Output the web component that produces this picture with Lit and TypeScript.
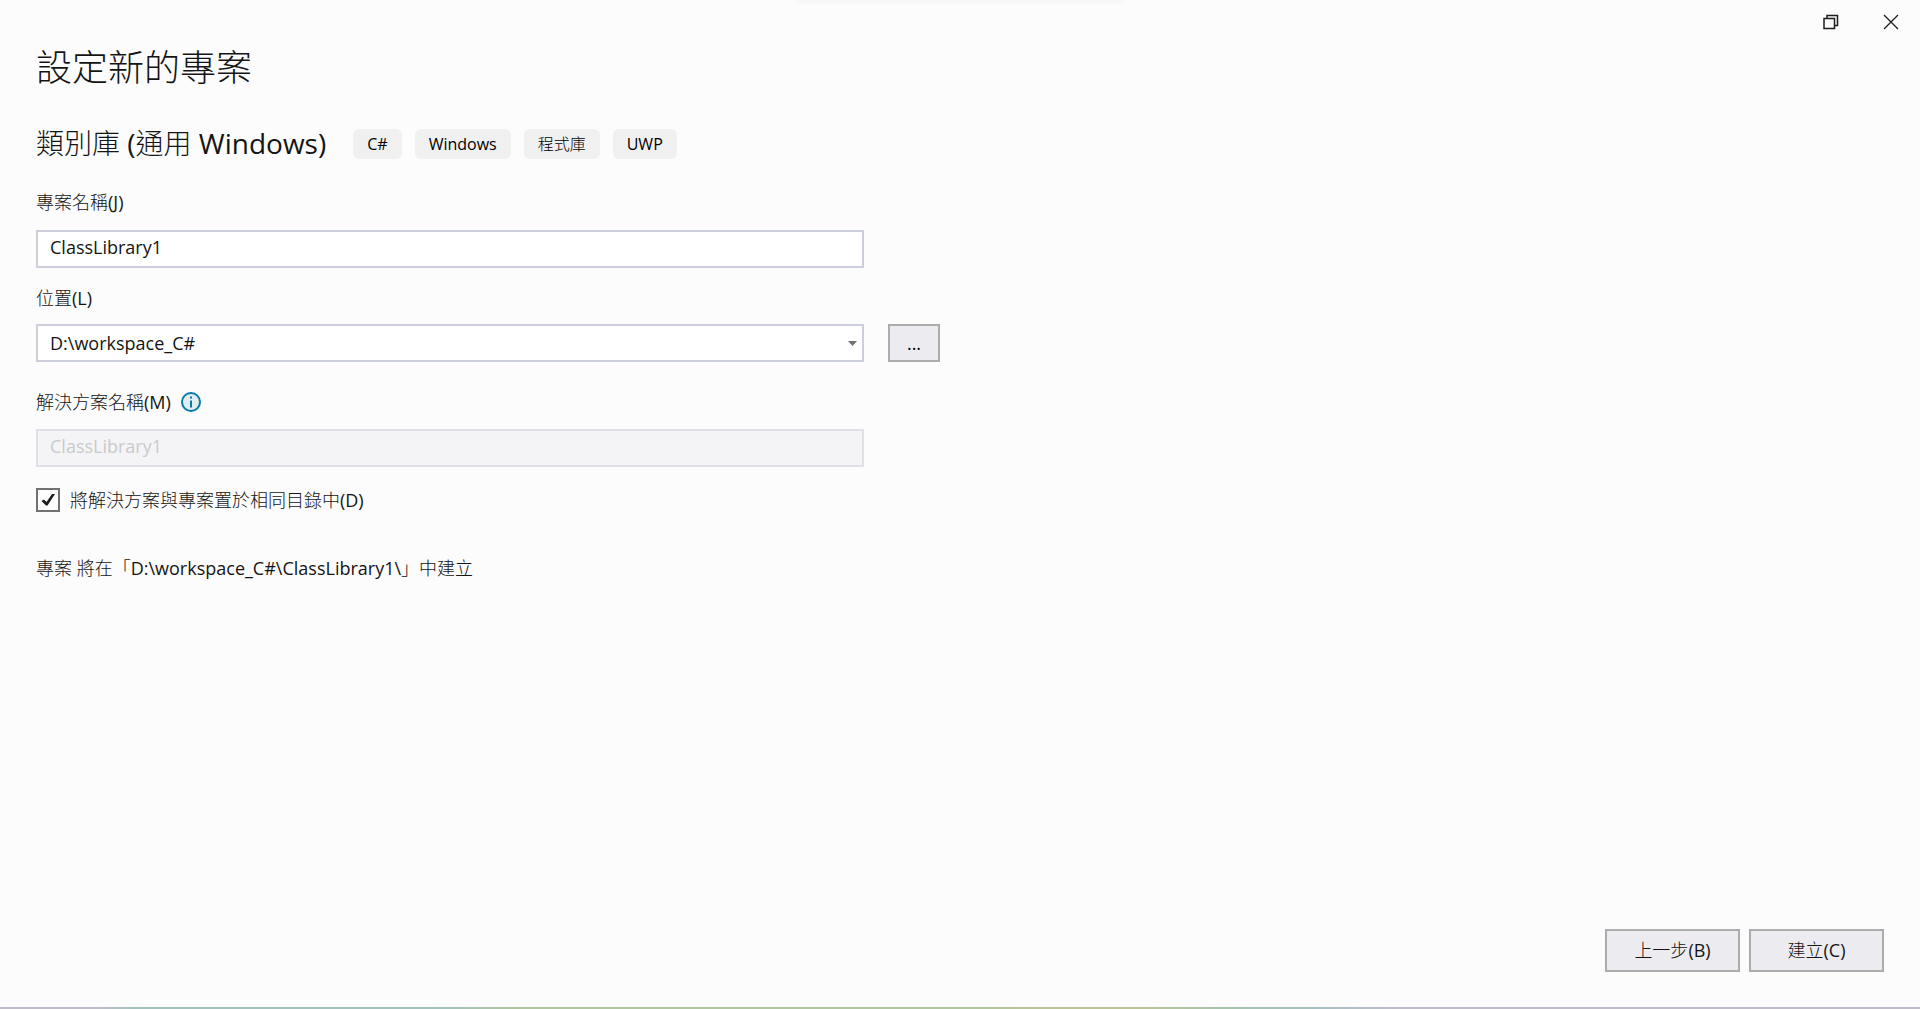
import { LitElement, html, css } from "lit";
import { customElement, state } from "lit/decorators.js";

/** Sets runs of Latin text at regular weight beside the lighter Chinese glyphs. */
const mixed = (text: string) =>
  text
    .split(/([!-~]+)/)
    .filter((run) => run !== "")
    .map((run) => (/^[!-~]/.test(run) ? html`<span class="latin">${run}</span>` : run));

@customElement("app-root")
export class AppRoot extends LitElement {
  @state() private projectName = "ClassLibrary1";
  @state() private location = "D:\\workspace_C#";
  @state() private sameDirectory = true;

  private tags = ["C#", "Windows", "程式庫", "UWP"];

  static styles = css`
    :host {
      display: block;
      color: #141414;
      background: #fcfcfc;
      font-family: "Open Sans", "Noto Sans CJK TC", sans-serif;
      font-size: 18px;
      font-weight: 300;
      line-height: 24px;
    }
    * {
      box-sizing: border-box;
    }
    button,
    input,
    select {
      font: inherit;
      color: inherit;
      margin: 0;
      border-radius: 0;
    }
    .window {
      position: relative;
      display: flex;
      flex-direction: column;
      min-height: 100vh;
      overflow: hidden;
    }
    .shade {
      position: absolute;
      top: -8px;
      left: 50%;
      width: 328px;
      height: 8px;
      margin-left: -164px;
      box-shadow: 0 0 8px rgba(0, 0, 0, 0.06);
    }
    .titlebar {
      display: flex;
      justify-content: flex-end;
      height: 44px;
    }
    .caption {
      display: grid;
      place-items: center;
      width: 60px;
      height: 44px;
      padding: 0 0 0 2px;
      border: 0;
      background: none;
    }
    main {
      flex: 1;
      padding: 0 36px;
    }
    h1 {
      margin: 0;
      font-size: 36px;
      font-weight: 300;
      line-height: 48px;
    }
    .template {
      display: flex;
      align-items: center;
      gap: 27px;
      margin-top: 32px;
    }
    h2 {
      margin: 0;
      padding-bottom: 2px;
      font-size: 28px;
      font-weight: 300;
      line-height: 38px;
    }
    .latin {
      font-weight: 400;
    }
    .tags {
      display: flex;
      gap: 13px;
      margin: 0;
      padding: 0;
      list-style: none;
    }
    .tag {
      padding: 3px 14px;
      border-radius: 6px;
      background: #f0f0f0;
      color: #000;
      font-size: 16px;
    }
    .field {
      display: flex;
      flex-direction: column;
      align-items: flex-start;
    }
    .label-row {
      display: flex;
      align-items: center;
      gap: 10px;
    }
    .row {
      display: flex;
      gap: 24px;
      width: 100%;
    }
    .box {
      width: 100%;
      max-width: 828px;
      height: 38px;
      padding: 0 12px;
      border: 2px solid #cccedb;
      background: #fff;
      font-weight: 400;
      outline: none;
    }
    .text {
      padding-bottom: 5px;
    }
    .box:disabled {
      border-color: #e0e0e8;
      background: #f4f4f6;
      color: #cacacc;
      opacity: 1;
    }
    .combo {
      position: relative;
      width: 100%;
      max-width: 828px;
    }
    .combo .box {
      display: block;
      appearance: none;
    }
    .arrow {
      position: absolute;
      right: 7px;
      top: 17px;
      pointer-events: none;
    }
    .button {
      padding: 0 0 2px;
      border: 2px solid #acacac;
      background: #ececf0;
      text-align: center;
    }
    .browse {
      flex: none;
      width: 52px;
      height: 38px;
      padding: 0;
      color: #000;
      font-weight: 400;
    }
    .name {
      margin-top: 26px;
      gap: 16px;
    }
    .location {
      margin-top: 18px;
      gap: 14px;
    }
    .solution {
      margin-top: 28px;
      gap: 15px;
    }
    .check {
      display: flex;
      align-items: center;
      gap: 10px;
      margin-top: 21px;
    }
    .tick {
      appearance: none;
      width: 24px;
      height: 24px;
      border: 2px solid #717171;
      background: #fefefe;
    }
    .tickbox {
      display: grid;
    }
    .tickbox > * {
      grid-area: 1 / 1;
      place-self: center;
    }
    .mark {
      pointer-events: none;
    }
    .summary {
      margin: 44px 0 0;
    }
    footer {
      display: flex;
      justify-content: flex-end;
      gap: 9px;
      padding: 0 36px 35px;
    }
    .action {
      width: 135px;
      height: 43px;
    }
    .edge {
      height: 2px;
      background: linear-gradient(
        90deg,
        #bfbcc8 0 5%,
        #a4c2bd 7% 23%,
        #b0c4a0 27% 50%,
        #bcc495 55% 59%,
        #a6c3b0 64%,
        #a6c0bf 68%,
        #bfbcc8 73%
      );
    }
  `;

  render() {
    return html`
      <div class="window">
        <div class="shade"></div>
        <header class="titlebar">
          <button class="caption" aria-label="還原">
            <svg width="16" height="16" viewBox="0 0 16 16" fill="none" stroke="#1e1e1e" stroke-width="1.5">
              <path d="M4 4V1.5H14.5V11.5H12" />
              <path d="M1 4.5H11.5V14.5H1Z" />
            </svg>
          </button>
          <button class="caption" aria-label="關閉">
            <svg width="16" height="16" viewBox="0 0 16 16" fill="none" stroke="#1e1e1e" stroke-width="1.3">
              <path d="M1 1L15 15M15 1L1 15" />
            </svg>
          </button>
        </header>
        <main>
          <h1>設定新的專案</h1>
          <div class="template">
            <h2>${mixed("類別庫 (通用 Windows)")}</h2>
            <ul class="tags">
              ${this.tags.map((tag) => html`<li class="tag">${mixed(tag)}</li>`)}
            </ul>
          </div>
          <div class="field name">
            <label for="name">${mixed("專案名稱(J)")}</label>
            <input
              id="name"
              class="box text"
              .value=${this.projectName}
              @input=${(e: Event) => (this.projectName = (e.target as HTMLInputElement).value)}
            />
          </div>
          <div class="field location">
            <label for="location">${mixed("位置(L)")}</label>
            <div class="row">
              <div class="combo">
                <select id="location" class="box">
                  <option>${this.location}</option>
                </select>
                <svg class="arrow" width="9" height="5" viewBox="0 0 9 5"><path d="M0 0H9L4.5 5Z" fill="#717171" /></svg>
              </div>
              <button class="button browse">...</button>
            </div>
          </div>
          <div class="field solution">
            <div class="label-row">
              <label for="solution">${mixed("解決方案名稱(M)")}</label>
              <svg width="20" height="20" viewBox="0 0 20 20">
                <circle cx="10" cy="10" r="9" fill="#e1edf1" stroke="#077ca6" stroke-width="2" />
                <path d="M9 4.5h2v2H9zM9 8.5h2v7H9z" fill="#077ca6" />
              </svg>
            </div>
            <input id="solution" class="box text" .value=${this.projectName} ?disabled=${this.sameDirectory} />
          </div>
          <div class="check">
            <span class="tickbox">
              <input
                id="same"
                class="tick"
                type="checkbox"
                .checked=${this.sameDirectory}
                @change=${(e: Event) => (this.sameDirectory = (e.target as HTMLInputElement).checked)}
              />
              ${this.sameDirectory
                ? html`<svg class="mark" width="14" height="14" viewBox="0 0 14 14">
                    <path d="M0.5 8L3 6.5L5.5 9L11 1H14L6.5 12.5H5Z" fill="#1e1e1e" />
                  </svg>`
                : null}
            </span>
            <label for="same">${mixed("將解決方案與專案置於相同目錄中(D)")}</label>
          </div>
          <p class="summary">${mixed(`專案 將在「${this.location}\\${this.projectName}\\」中建立`)}</p>
        </main>
        <footer>
          <button class="button action">${mixed("上一步(B)")}</button>
          <button class="button action">${mixed("建立(C)")}</button>
        </footer>
        <div class="edge"></div>
      </div>
    `;
  }
}
